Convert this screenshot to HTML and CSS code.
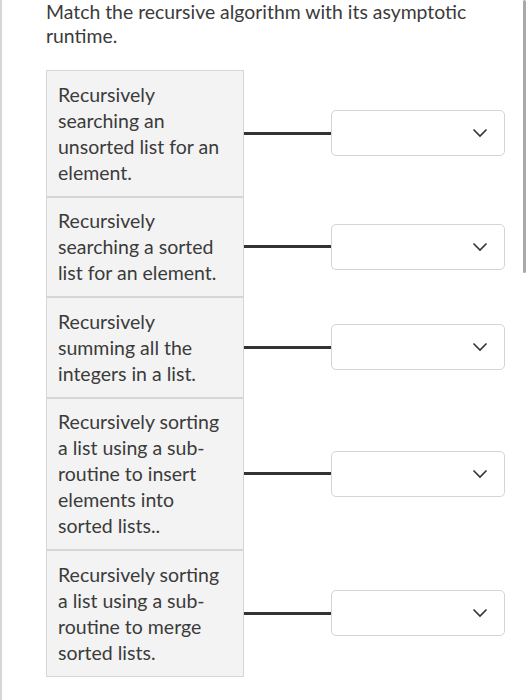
FILE: index.html
```html
<!DOCTYPE html>
<html>
<head>
<meta charset="utf-8">
<link rel="stylesheet" href="styles.css">
</head>
<body>
<div class="page">
  <p class="title">Match the recursive algorithm with its asymptotic runtime.</p>
  <div class="rows">
    <div class="row">
      <div class="prompt">Recursively searching an unsorted list for an element.</div>
      <div class="connector"></div>
      <div class="select"><svg class="chev" width="16" height="10" viewBox="0 0 16 10"><polyline points="1.5,1.5 8,8 14.5,1.5" fill="none" stroke="#333" stroke-width="1.6"/></svg></div>
    </div>
    <div class="row">
      <div class="prompt">Recursively searching a sorted list for an element.</div>
      <div class="connector"></div>
      <div class="select"><svg class="chev" width="16" height="10" viewBox="0 0 16 10"><polyline points="1.5,1.5 8,8 14.5,1.5" fill="none" stroke="#333" stroke-width="1.6"/></svg></div>
    </div>
    <div class="row">
      <div class="prompt">Recursively summing all the integers in a list.</div>
      <div class="connector"></div>
      <div class="select"><svg class="chev" width="16" height="10" viewBox="0 0 16 10"><polyline points="1.5,1.5 8,8 14.5,1.5" fill="none" stroke="#333" stroke-width="1.6"/></svg></div>
    </div>
    <div class="row">
      <div class="prompt">Recursively sorting a list using a sub-routine to insert elements into sorted lists..</div>
      <div class="connector"></div>
      <div class="select"><svg class="chev" width="16" height="10" viewBox="0 0 16 10"><polyline points="1.5,1.5 8,8 14.5,1.5" fill="none" stroke="#333" stroke-width="1.6"/></svg></div>
    </div>
    <div class="row">
      <div class="prompt">Recursively sorting a list using a sub-routine to merge sorted lists.</div>
      <div class="connector"></div>
      <div class="select"><svg class="chev" width="16" height="10" viewBox="0 0 16 10"><polyline points="1.5,1.5 8,8 14.5,1.5" fill="none" stroke="#333" stroke-width="1.6"/></svg></div>
    </div>
  </div>
</div>
<div class="scrollbar"></div>
</body>
</html>
```
FILE: styles.css
```css
html, body {
  margin: 0;
  padding: 0;
  background: #fff;
}
body {
  font-family: Lato, "Noto Sans", sans-serif;
  color: #3b3b3b;
}
.page {
  border-left: 2px solid #d6d6d6;
  min-height: 700px;
  box-sizing: border-box;
  padding-left: 44px;
  width: 531px;
}
.title {
  margin: 0;
  font-size: 19.4px;
  line-height: 24px;
  width: 460px;
}
.rows {
  margin-top: 22px;
  display: flex;
  flex-direction: column;
}
.row {
  display: flex;
  align-items: center;
}
.prompt {
  box-sizing: border-box;
  width: 198px;
  background: #f3f3f3;
  border: 1px solid #d6d6d6;
  padding: 10.5px 14px 10px 11px;
  font-size: 19.5px;
  line-height: 26px;
}
.connector {
  width: 87px;
  height: 3px;
  background: #333;
}
.select {
  box-sizing: border-box;
  width: 174px;
  height: 46px;
  border: 1px solid #d4d4d4;
  border-radius: 5px;
  display: flex;
  align-items: center;
  justify-content: flex-end;
  padding-right: 16px;
}
.chev {
  display: block;
}
.scrollbar {
  position: fixed;
  left: 523px;
  top: 0;
  width: 3px;
  height: 273px;
  background: #a9a9a9;
  border-radius: 2px;
}
```
